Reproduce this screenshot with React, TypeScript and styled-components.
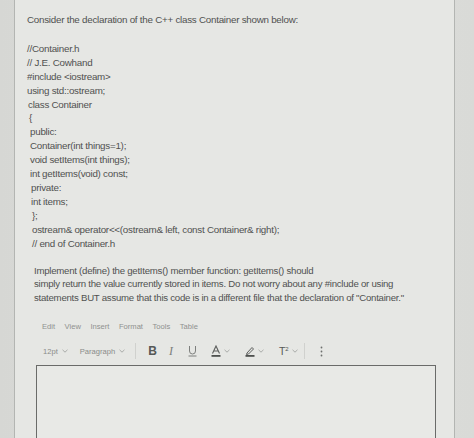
import React from "react";
import styled, { createGlobalStyle } from "styled-components";

const Global = createGlobalStyle`
  html, body { margin: 0; padding: 0; }
  body {
    background: #d8d9d6;
    font-family: "Liberation Sans", Arial, sans-serif;
    -webkit-font-smoothing: antialiased;
  }
`;

const Page = styled.div`
  display: flex;
  height: 438px;
  overflow: hidden;
  padding: 0 19px 0 14px;
  background: linear-gradient(90deg, #d6d7d4 0%, #dfe0dd 50%, #d9dad7 100%);
`;

const Panel = styled.div`
  flex: 1;
  display: flex;
  flex-direction: column;
  background: #e6e7e4;
  border-left: 1px solid #b3b5b2;
  border-right: 1px solid #b3b5b2;
  padding: 13px 0 0 12px;
  color: #505150;
`;

const Line = styled.div<{ $indent?: number; $size?: number }>`
  font-size: ${(p) => p.$size ?? 9.8}px;
  line-height: 13.9px;
  letter-spacing: -0.25px;
  white-space: pre;
  padding-left: ${(p) => p.$indent ?? 0}px;
`;

const Code = styled.div`
  margin-top: 15px;
  display: flex;
  flex-direction: column;
`;

const Para = styled.div`
  margin-top: 13px;
  padding-left: 7px;
  display: flex;
  flex-direction: column;
`;

const Menu = styled.div`
  margin-top: 15px;
  padding-left: 15px;
  display: flex;
  gap: 9.5px;
  font-size: 7.6px;
  line-height: 14px;
  color: #8f918f;
`;

const Toolbar = styled.div`
  margin-top: 9px;
  padding-left: 16px;
  height: 20px;
  display: flex;
  align-items: center;
  color: #8a8c8a;
  font-size: 7.6px;
`;

const Drop = styled.span<{ $w?: number }>`
  display: inline-flex;
  align-items: center;
  gap: 4px;
  margin-right: ${(p) => p.$w ?? 10}px;
`;

const Sep = styled.span<{ $after?: number }>`
  width: 1px;
  height: 16px;
  background: #d0d1ce;
  margin: 0 ${(p) => p.$after ?? 10}px 0 0;
`;

const Btn = styled.span<{ $gap?: number }>`
  display: inline-flex;
  align-items: center;
  gap: 3px;
  margin-right: ${(p) => p.$gap ?? 10}px;
  color: #565856;
`;

const Glyph = styled.span<{ $font?: string; $weight?: number; $italic?: boolean; $size?: number }>`
  font-family: ${(p) => p.$font ?? '"Liberation Sans", Arial, sans-serif'};
  font-weight: ${(p) => p.$weight ?? 400};
  font-style: ${(p) => (p.$italic ? "italic" : "normal")};
  font-size: ${(p) => p.$size ?? 11}px;
  line-height: 1;
`;

const Editor = styled.div`
  margin-top: 6px;
  margin-left: 9px;
  width: 398px;
  flex: 1;
  min-height: 90px;
  border: 1.5px solid #6a6b69;
  border-bottom: none;
  background: #e8e9e6;
`;

const Chevron = () => (
  <svg width="6" height="4" viewBox="0 0 6 4">
    <path d="M0.5 0.8 L3 3.2 L5.5 0.8" fill="none" stroke="#a3a5a3" strokeWidth="0.9" />
  </svg>
);

const codeLines: [string, number][] = [
  ["//Container.h", 0],
  ["// J.E. Cowhand", 0],
  ["#include <iostream>", 0],
  ["using std::ostream;", 0],
  ["class Container", 1],
  ["{", 2],
  ["public:", 3],
  ["Container(int things=1);", 3],
  ["void setItems(int things);", 3],
  ["int getItems(void) const;", 3],
  ["private:", 4],
  ["int items;", 4],
  ["};", 5],
  ["ostream& operator<<(ostream& left, const Container& right);", 5],
  ["// end of Container.h", 5],
];

export default function App() {
  return (
    <>
      <Global />
      <Page>
        <Panel>
          <Line>Consider the declaration of the C++ class Container shown below:</Line>
          <Code>
            {codeLines.map(([t, i], k) => (
              <Line key={k} $indent={i}>
                {t}
              </Line>
            ))}
          </Code>
          <Para>
            <Line $size={9.65}>Implement (define) the getItems() member function: getItems() should</Line>
            <Line $size={9.65}>simply return the value currently stored in items. Do not worry about any #include or using</Line>
            <Line $size={9.65}>statements BUT assume that this code is in a different file that the declaration of "Container."</Line>
          </Para>
          <Menu>
            <span>Edit</span>
            <span>View</span>
            <span>Insert</span>
            <span>Format</span>
            <span>Tools</span>
            <span>Table</span>
          </Menu>
          <Toolbar>
            <Drop $w={12}>
              12pt <Chevron />
            </Drop>
            <Drop $w={10}>
              Paragraph <Chevron />
            </Drop>
            <Sep $after={12} />
            <Btn $gap={12}>
              <Glyph $weight={700} $size={12}>B</Glyph>
            </Btn>
            <Btn $gap={15}>
              <Glyph $font='"Liberation Serif", serif' $italic $size={12} style={{ color: "#7c7e7c" }}>
                I
              </Glyph>
            </Btn>
            <Btn $gap={14}>
              <svg width="9" height="12" viewBox="0 0 9 12">
                <path d="M1.5 1 V6 A3 3 0 0 0 7.5 6 V1" fill="none" stroke="#7d7f7d" strokeWidth="1" />
                <path d="M0.5 11 H8.5" stroke="#7d7f7d" strokeWidth="1" />
              </svg>
            </Btn>
            <Btn $gap={15}>
              <svg width="10" height="12" viewBox="0 0 10 12">
                <path d="M1.5 8.5 L5 1 L8.5 8.5 M2.8 6 H7.2" fill="none" stroke="#5c5e5c" strokeWidth="1.1" />
                <rect x="0.5" y="10" width="9" height="1.8" fill="#4e504e" />
              </svg>
              <Chevron />
            </Btn>
            <Btn $gap={15}>
              <svg width="10" height="12" viewBox="0 0 10 12">
                <path d="M2 8 L7 2.5 L8.5 4 L3.5 9 L1.5 9.5 Z" fill="none" stroke="#5c5e5c" strokeWidth="1" />
                <rect x="0.5" y="10" width="9" height="1.8" fill="#4e504e" />
              </svg>
              <Chevron />
            </Btn>
            <Btn $gap={6}>
              <span style={{ display: "inline-flex", alignItems: "flex-start" }}>
                <Glyph $size={10.5}>T</Glyph>
                <Glyph $size={6}>2</Glyph>
              </span>
              <Chevron />
            </Btn>
            <Sep $after={15} />
            <Btn>
              <svg width="3" height="11" viewBox="0 0 3 11">
                <circle cx="1.5" cy="1.5" r="0.9" fill="#6d6f6d" />
                <circle cx="1.5" cy="5.5" r="0.9" fill="#6d6f6d" />
                <circle cx="1.5" cy="9.5" r="0.9" fill="#6d6f6d" />
              </svg>
            </Btn>
          </Toolbar>
          <Editor />
        </Panel>
      </Page>
    </>
  );
}
